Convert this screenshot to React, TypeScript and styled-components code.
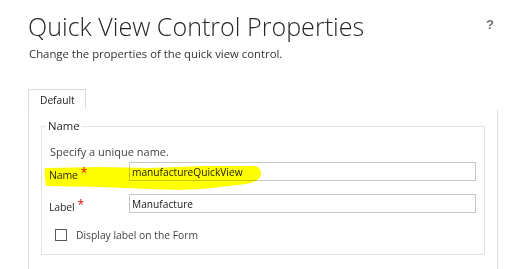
import React from "react";
import styled, { createGlobalStyle } from "styled-components";

const Global = createGlobalStyle`
  html, body { margin: 0; padding: 0; background: #ffffff; }
  body { font-family: "Open Sans", "Noto Sans", "Liberation Sans", sans-serif; color: #262626; }
`;

const Page = styled.div`
  position: relative;
  width: 524px;
  height: 269px;
  overflow: hidden;
  box-sizing: border-box;
  padding: 0 26px 0 28px;
`;

const Header = styled.div`
  display: flex;
  justify-content: space-between;
  align-items: flex-start;
  padding-top: 8px;
`;

const Title = styled.h1`
  margin: 0;
  font-family: "Open Sans", "Noto Sans", sans-serif;
  font-weight: 300;
  font-size: 25.1px;
  line-height: 36px;
  color: #262626;
`;

const Help = styled.span`
  font-family: "Liberation Sans", "DejaVu Sans", sans-serif;
  font-weight: 700;
  font-size: 13px;
  line-height: 15px;
  color: #707070;
  margin-top: 9px;
  margin-right: 4px;
`;

const Subtitle = styled.p`
  margin: 2px 0 0 1px;
  font-size: 11.35px;
  line-height: 15px;
  color: #333333;
`;

const Tabs = styled.div`
  display: flex;
  margin-top: 28px;
`;

const Tab = styled.div`
  width: 45px;
  height: 19px;
  border: 1px solid #dadada;
  border-bottom: none;
  font-size: 10.2px;
  line-height: 21px;
  padding-left: 11px;
  box-sizing: content-box;
  color: #1a1a1a;
`;

const Panel = styled.div`
  width: 470px;
  height: 170px;
  border-left: 1px solid #dedede;
  border-right: 1px solid #dedede;
  padding: 10px 12px 20px 12px;
  box-sizing: border-box;
`;

const Group = styled.fieldset`
  margin: 0;
  border: 1px solid #e2e2e2;
  padding: 11px 8px 12px 7px;
  display: flex;
  flex-direction: column;
`;

const Legend = styled.legend`
  font-size: 11.3px;
  line-height: 14px;
  padding: 0 2px;
  margin-left: -3px;
  color: #262626;
`;

const Hint = styled.div`
  font-size: 11px;
  line-height: 15px;
  color: #444444;
  margin-left: 1px;
  margin-bottom: 3px;
`;

const Row = styled.div<{ $gap?: number }>`
  display: flex;
  align-items: flex-start;
  margin-top: ${(p) => p.$gap ?? 0}px;
`;

const FieldLabel = styled.label`
  width: 80px;
  flex: none;
  font-size: 10.5px;
  letter-spacing: -0.15px;
  line-height: 15px;
  padding-top: 5px;
  color: #262626;
`;

const Star = styled.span`
  color: #e00000;
  font-size: 12px;
  margin-left: 3px;
  position: relative;
  top: -2px;
`;

const TextBox = styled.div`
  flex: 1;
  height: 16px;
  padding-top: 1px;
  border: 1px solid #c6c6c6;
  font-size: 10.2px;
  line-height: 16px;
  padding-left: 2px;
  color: #1a1a1a;
`;

const CheckRow = styled.div`
  display: flex;
  align-items: center;
  margin-top: 13px;
  margin-left: 6px;
`;

const Box = styled.span`
  width: 10px;
  height: 10px;
  border: 1px solid #5a5a5a;
  background: #ffffff;
  flex: none;
`;

const CheckText = styled.span`
  font-size: 10.3px;
  line-height: 14px;
  margin-left: 9px;
  color: #444444;
`;

const Highlight = styled.svg`
  position: absolute;
  left: 0;
  top: 0;
  mix-blend-mode: multiply;
  pointer-events: none;
`;

export default function App() {
  return (
    <>
      <Global />
      <Page>
        <Header>
          <Title>Quick View Control Properties</Title>
          <Help>?</Help>
        </Header>
        <Subtitle>Change the properties of the quick view control.</Subtitle>
        <Tabs>
          <Tab>Default</Tab>
        </Tabs>
        <Panel>
          <Group>
            <Legend>Name</Legend>
            <Hint>Specify a unique name.</Hint>
            <Row>
              <FieldLabel>
                Name<Star>*</Star>
              </FieldLabel>
              <TextBox>manufactureQuickView</TextBox>
            </Row>
            <Row $gap={11}>
              <FieldLabel>
                Label<Star>*</Star>
              </FieldLabel>
              <TextBox>Manufacture</TextBox>
            </Row>
            <CheckRow>
              <Box />
              <CheckText>Display label on the Form</CheckText>
            </CheckRow>
          </Group>
        </Panel>
        <Highlight width="524" height="269" viewBox="0 0 524 269">
          <path
            d="M45,168 L100,167 L150,168 L205,166 L255,166 Q262,168 261,175 Q259,182 246,184 L212,188 Q185,191 150,189 L100,187 L46,186 Q44,177 45,168 Z"
            fill="#ffff00"
          />
        </Highlight>
      </Page>
    </>
  );
}
